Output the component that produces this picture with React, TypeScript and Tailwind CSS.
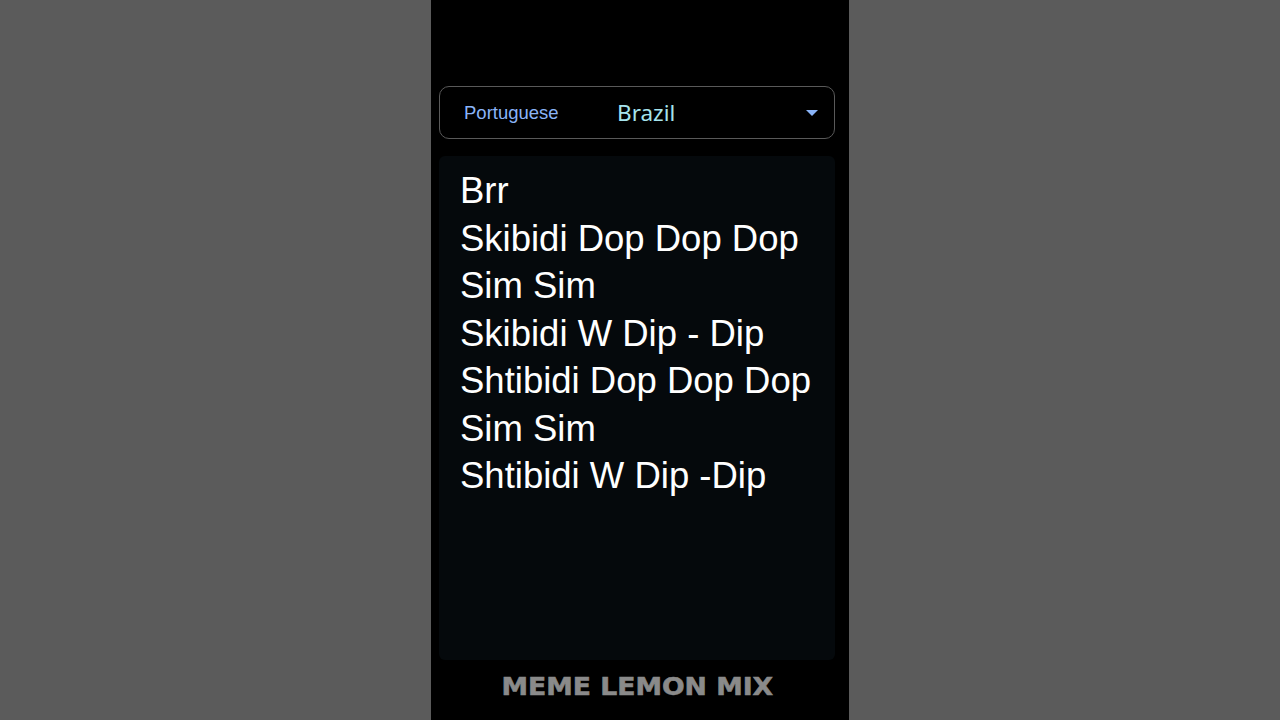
import React from "react";

const lines = [
  "Brr",
  "Skibidi Dop Dop Dop",
  "Sim Sim",
  "Skibidi W Dip - Dip",
  "Shtibidi Dop Dop Dop",
  "Sim Sim",
  "Shtibidi W Dip -Dip",
];

export default function App() {
  return (
    <div className="w-full h-[720px] bg-[#5b5b5b] flex justify-center overflow-hidden">
      <div className="w-[418px] h-full bg-black flex flex-col pl-2 pr-[14px] pt-[86px]">
        <div className="h-[53px] rounded-[10px] border border-[#595959] flex items-center pl-6 pr-4 shrink-0">
          <span className="text-[18.5px] text-[#8ab4f8] w-[153px]" style={{ fontFamily: '"Liberation Sans", Arial, sans-serif' }}>
            Portuguese
          </span>
          <span className="text-[22.5px] text-[#a6e4ee] flex-1 pt-[1px]" style={{ fontFamily: '"Noto Sans", sans-serif' }}>
            Brazil
          </span>
          <svg width="12" height="7" viewBox="0 0 12 7" className="mt-[1px]">
            <polygon points="0,0 12,0 6,6" fill="#8ab4f8" />
          </svg>
        </div>
        <div className="mt-[17px] h-[504px] rounded-md bg-[#05090c] pl-[21px] pt-[11px] shrink-0">
          {lines.map((l, i) => (
            <div
              key={i}
              className="text-[36.5px] leading-[47.5px] text-white whitespace-nowrap"
              style={{ fontFamily: '"Liberation Sans", Arial, sans-serif' }}
            >
              {l}
            </div>
          ))}
        </div>
        <div className="flex-1 flex items-center justify-center pb-[6px]">
          <span
            className="text-[24px] font-extrabold text-[#8a8a8a] scale-x-[1.11] inline-block"
            style={{ fontFamily: '"DejaVu Sans", Verdana, sans-serif', WebkitTextStroke: "0.6px #8a8a8a" }}
          >
            MEME LEMON MIX
          </span>
        </div>
      </div>
    </div>
  );
}
